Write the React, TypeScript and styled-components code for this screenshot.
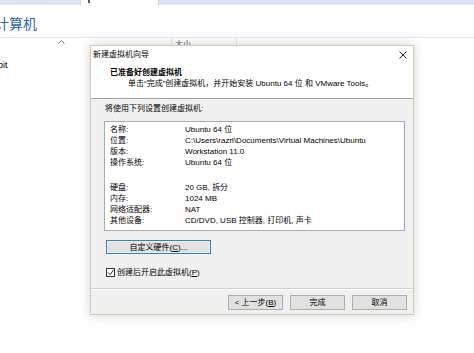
import React from 'react'
import styled, { createGlobalStyle } from 'styled-components'

const GlobalStyle = createGlobalStyle`
  body {
    margin: 0;
    background: #fff;
  }
`

const FONT = `"Liberation Sans", "Noto Sans CJK SC", sans-serif`

const Page = styled.div`
  position: relative;
  width: 474px;
  height: 353px;
  overflow: hidden;
  background: #fff;
  font-family: ${FONT};
  color: #000;
`

/* explorer window behind the dialog */
const TabStrip = styled.div`
  display: flex;
  height: 5px;
`

const Tab = styled.div<{ $w: number; $bg: string }>`
  width: ${(p) => p.$w}px;
  flex-shrink: 0;
  background: ${(p) => p.$bg};
  border-right: 1px solid #c9d2de;
  position: relative;
`

const TabMark = styled.span`
  position: absolute;
  left: 7px;
  top: 0;
  width: 2px;
  height: 3px;
  background: #5b5b5b;
`

const Heading = styled.div`
  height: 21px;
  padding-top: 11px;
  border-bottom: 1px solid #e1e8f2;
  font-size: 14px;
  line-height: 16px;
  color: #2b64b4;
  margin-left: -5px;
  white-space: nowrap;
`

const ColumnRow = styled.div`
  display: flex;
  height: 13px;
`

const Column = styled.div<{ $w: number }>`
  width: ${(p) => p.$w}px;
  flex-shrink: 0;
  border-right: 1px solid #e5e5e5;
  font-size: 8px;
  line-height: 14px;
  color: #4c607a;
  padding-left: 3px;
  box-sizing: border-box;
`

const SortArrow = styled.div`
  padding: 2px 0 0 55px;
  display: flex;
`

const FileRow = styled.div`
  margin-top: 9px;
  margin-left: -2px;
  font-size: 9px;
  line-height: 11px;
`

/* dialog */
const Dialog = styled.div`
  position: absolute;
  left: 90px;
  top: 45px;
  width: 322px;
  border: 1px solid #d6c8ae;
  background: #f0f0f0;
  box-shadow: 0 0 12px rgba(0, 0, 0, 0.18);
  font-size: 8px;
  line-height: 11px;
`

const TitleBar = styled.div`
  height: 17px;
  background: #fff;
  display: flex;
  align-items: center;
  justify-content: space-between;
  padding: 0 6px 0 2px;
`

const Header = styled.div`
  background: #fff;
  border-bottom: 1px solid #a0a0a0;
  padding-top: 4px;
  box-sizing: border-box;
  height: 36px;
`

const HeaderTitle = styled.div`
  font-weight: bold;
  padding-left: 19px;
`

const HeaderSub = styled.div`
  padding-left: 37px;
  white-space: nowrap;
`

const Body = styled.div`
  height: 190px;
  padding: 4px 8px 0 13px;
  box-sizing: border-box;
  border-bottom: 1px solid #cfcfcf;
`

const Intro = styled.div`
  padding-left: 1px;
`

const SummaryBox = styled.div`
  margin-top: 7px;
  height: 110px;
  box-sizing: border-box;
  border: 1px solid #a9a9b4;
  background: #fff;
  padding: 2px 0 0 5px;
`

const SummaryRow = styled.div<{ $gap?: boolean }>`
  display: flex;
  margin-top: ${(p) => (p.$gap ? 14 : 0)}px;
  white-space: nowrap;
`

const Label = styled.div`
  width: 75px;
  flex-shrink: 0;
`

const Value = styled.div``

const HardwareButton = styled.button`
  display: block;
  margin: 9px 0 0 2px;
  width: 105px;
  height: 14px;
  padding: 0;
  font: inherit;
  color: #000;
  background: #e1e1e1;
  border: 1px solid #3c7fb1;
  box-shadow: inset 0 0 0 1px #e5f1fb;
`

const CheckRow = styled.label`
  display: flex;
  align-items: center;
  gap: 2px;
  margin: 13px 0 0 2px;
`

const CheckBox = styled.span`
  width: 7px;
  height: 7px;
  border: 1px solid #333;
  background: #fff;
  display: flex;
  align-items: center;
  justify-content: center;
`

const Footer = styled.div`
  height: 25px;
  display: flex;
  justify-content: flex-end;
  align-items: center;
  gap: 7px;
  padding: 1px 6px 0 0;
  box-sizing: border-box;
  border-top: 1px solid #fff;
`

const Button = styled.button`
  width: 55px;
  height: 15px;
  padding: 0;
  font: inherit;
  color: #000;
  background: #e1e1e1;
  border: 1px solid #adadad;
`

const Key = styled.span`
  text-decoration: underline;
`

const rows: [string, string][] = [
  ['名称:', 'Ubuntu 64 位'],
  ['位置:', 'C:\\Users\\razrl\\Documents\\Virtual Machines\\Ubuntu'],
  ['版本:', 'Workstation 11.0'],
  ['操作系统:', 'Ubuntu 64 位'],
]

const hardware: [string, string][] = [
  ['硬盘:', '20 GB, 拆分'],
  ['内存:', '1024 MB'],
  ['网络适配器:', 'NAT'],
  ['其他设备:', 'CD/DVD, USB 控制器, 打印机, 声卡'],
]

const CloseIcon = () => (
  <svg width="8" height="8" viewBox="0 0 8 8">
    <path d="M0.5 0.5 L7.5 7.5 M7.5 0.5 L0.5 7.5" stroke="#222" strokeWidth="1" />
  </svg>
)

const App = () => {
  return (
    <Page>
      <GlobalStyle />
      <TabStrip>
        <Tab $w={80} $bg="#dde4ef" />
        <Tab $w={77} $bg="#ffffff">
          <TabMark />
        </Tab>
        <Tab $w={317} $bg="#dbe3f4" />
      </TabStrip>
      <Heading>计算机</Heading>
      <ColumnRow>
        <Column $w={172}>
          <SortArrow>
            <svg width="7" height="4" viewBox="0 0 7 4">
              <path d="M0.5 3.5 L3.5 0.5 L6.5 3.5" stroke="#7a7a7a" fill="none" strokeWidth="1" />
            </svg>
          </SortArrow>
        </Column>
        <Column $w={65}>大小</Column>
      </ColumnRow>
      <FileRow>bit</FileRow>

      <Dialog>
        <TitleBar>
          <span>新建虚拟机向导</span>
          <CloseIcon />
        </TitleBar>
        <Header>
          <HeaderTitle>已准备好创建虚拟机</HeaderTitle>
          <HeaderSub>单击“完成”创建虚拟机，并开始安装 Ubuntu 64 位 和 VMware Tools。</HeaderSub>
        </Header>
        <Body>
          <Intro>将使用下列设置创建虚拟机:</Intro>
          <SummaryBox>
            {rows.map(([k, v]) => (
              <SummaryRow key={k}>
                <Label>{k}</Label>
                <Value>{v}</Value>
              </SummaryRow>
            ))}
            {hardware.map(([k, v], i) => (
              <SummaryRow key={k} $gap={i === 0}>
                <Label>{k}</Label>
                <Value>{v}</Value>
              </SummaryRow>
            ))}
          </SummaryBox>
          <HardwareButton>
            自定义硬件(<Key>C</Key>)...
          </HardwareButton>
          <CheckRow>
            <CheckBox>
              <svg width="7" height="7" viewBox="0 0 7 7">
                <path d="M1 3.5 L3 5.5 L6.5 1" stroke="#222" fill="none" strokeWidth="1" />
              </svg>
            </CheckBox>
            <span>
              创建后开启此虚拟机(<Key>P</Key>)
            </span>
          </CheckRow>
        </Body>
        <Footer>
          <Button>
            &lt; 上一步(<Key>B</Key>)
          </Button>
          <Button>完成</Button>
          <Button>取消</Button>
        </Footer>
      </Dialog>
    </Page>
  )
}

export default App
